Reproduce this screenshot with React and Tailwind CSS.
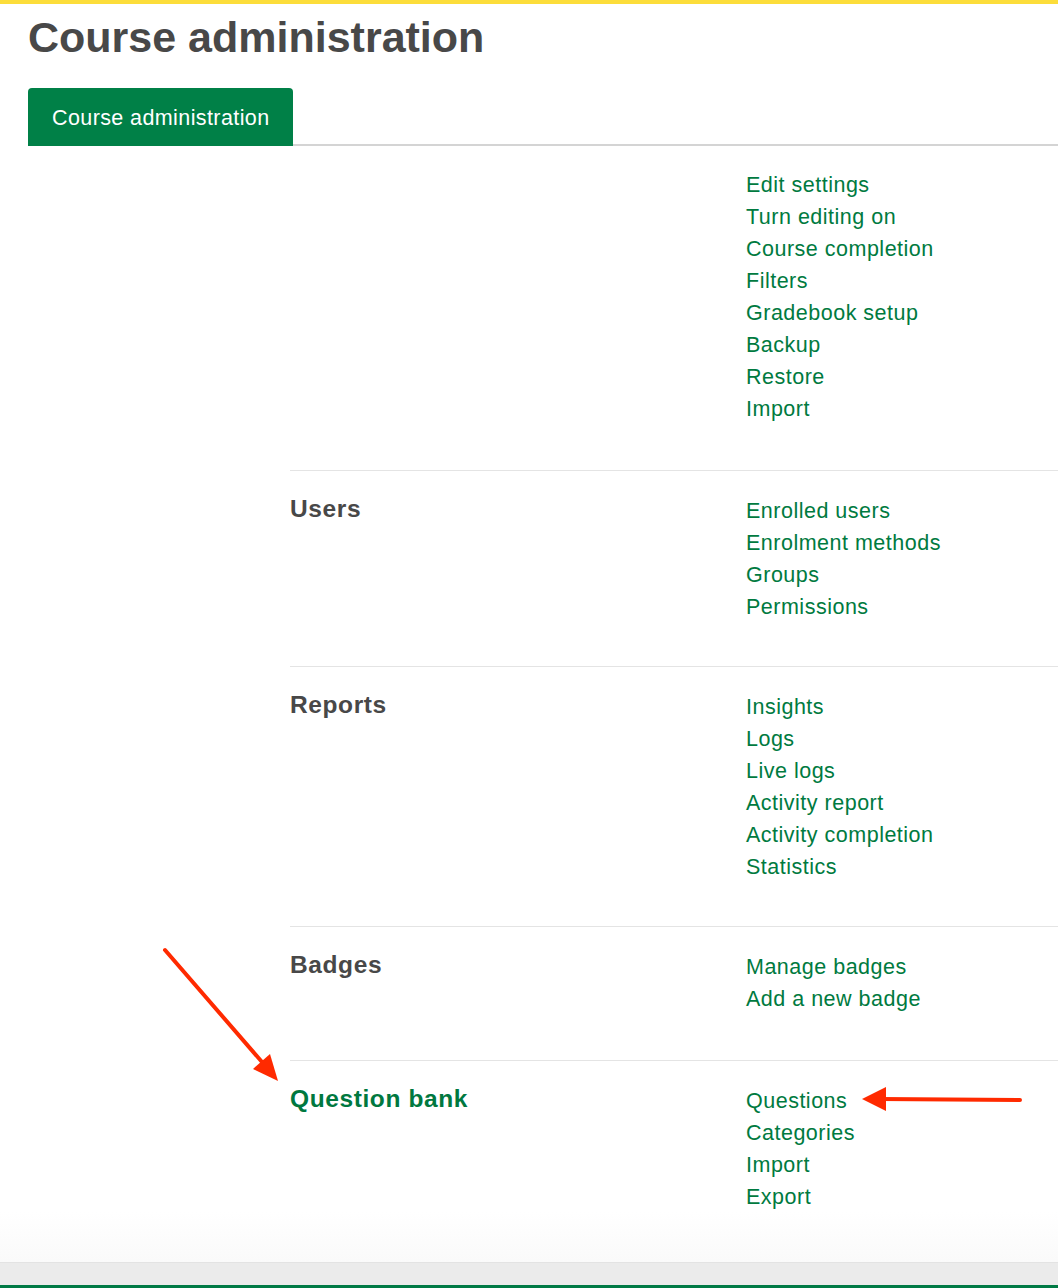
import React from "react";

const sections = [
  { title: "", items: ["Edit settings", "Turn editing on", "Course completion", "Filters", "Gradebook setup", "Backup", "Restore", "Import"] },
  { title: "Users", items: ["Enrolled users", "Enrolment methods", "Groups", "Permissions"] },
  { title: "Reports", items: ["Insights", "Logs", "Live logs", "Activity report", "Activity completion", "Statistics"] },
  { title: "Badges", items: ["Manage badges", "Add a new badge"] },
  { title: "Question bank", items: ["Questions", "Categories", "Import", "Export"], active: true },
];

export default function App() {
  return (
    <div className="relative w-[1058px] h-[1288px] bg-white overflow-hidden" style={{ fontFamily: '"Liberation Sans", Arial, sans-serif' }}>
      <div className="absolute left-0 right-0 top-[1212px] h-[50px] bg-gradient-to-b from-white to-[#fafafa]" />
      <div className="absolute left-0 right-0 top-[1262px] h-[23px] bg-[#ebebeb] border-t border-[#e3e3e3]" />
      <div className="absolute left-0 right-0 top-[1285px] h-[3px] bg-[#007a45]" />
      <div className="relative">
        <div className="h-[4px] bg-[#fcdd3a]" />
        <div className="pl-[28px]">
          <h1 className="text-[43px] font-bold leading-[48px] text-[#484848] pt-[9px]">Course administration</h1>
        </div>
        <div className="flex items-end mt-[27px]">
          <div className="w-[28px] h-[2px] bg-white" />
          <div className="h-[58px] w-[265px] bg-[#008047] rounded-t-[4px] flex items-center pl-[24px] pt-[2px] text-white text-[21.5px] tracking-[0.4px]">
            Course administration
          </div>
          <div className="flex-1 h-[2px] bg-[#d4d4d4]" />
        </div>
        <div className="pl-[290px]">
          {sections.map((s, i) => (
            <div
              key={i}
              className={`flex ${i > 0 ? "border-t border-[#e4e4e4] pt-[24px]" : "pt-[23px]"} ${i === 4 ? "pb-[20px]" : i === 0 ? "pb-[45px]" : i === 3 ? "pb-[45px]" : "pb-[43px]"}`}
            >
              <div className={`w-[456px] text-[24.5px] tracking-[0.6px] font-bold leading-[28px] ${s.active ? "text-[#00783f]" : "text-[#484848]"}`}>
                {s.title}
              </div>
              <div className="flex flex-col">
                {s.items.map((it) => (
                  <a key={it} className="text-[21.5px] tracking-[0.5px] leading-[32px] text-[#007a40]">{it}</a>
                ))}
              </div>
            </div>
          ))}
        </div>
      </div>
      <svg className="absolute left-0 top-0 pointer-events-none" width="1058" height="1288">
        <line x1="165" y1="950" x2="262" y2="1062" stroke="#ff2a00" strokeWidth="4" strokeLinecap="round" />
        <polygon points="278,1081 253,1069 270,1054" fill="#ff2a00" />
        <line x1="1020" y1="1100" x2="880" y2="1099" stroke="#ff2a00" strokeWidth="4" strokeLinecap="round" />
        <polygon points="862,1099 886,1087 886,1111" fill="#ff2a00" />
      </svg>
    </div>
  );
}
